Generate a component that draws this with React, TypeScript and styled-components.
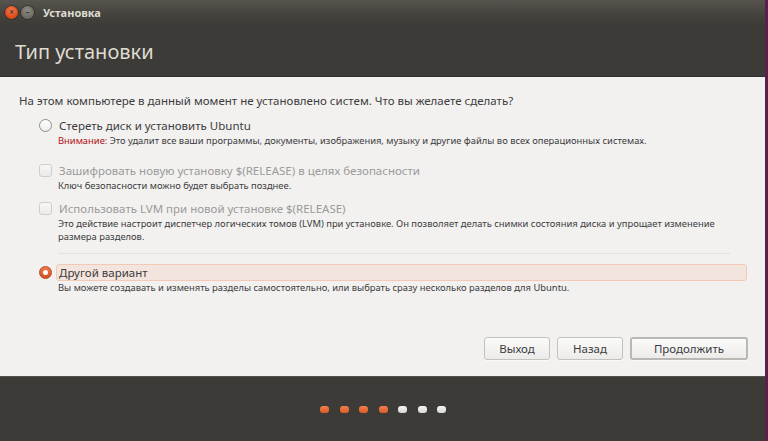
import React from 'react';
import styled, { createGlobalStyle } from 'styled-components';

const Global = createGlobalStyle`
  html, body {
    margin: 0;
    padding: 0;
    background: #5b1f4c;
    overflow: hidden;
  }
  body {
    font-family: 'Noto Sans', 'DejaVu Sans', sans-serif;
  }
`;

const Window = styled.div`
  width: 765px;
  height: 441px;
  display: flex;
  flex-direction: column;
  background: #f2f1f0;
`;

const TitleBar = styled.div`
  height: 24px;
  display: flex;
  align-items: center;
  padding-left: 5px;
  gap: 3px;
  background: linear-gradient(#57544e, #45433e 60%, #3d3c37);
`;

const WinButton = styled.span<{ close?: boolean }>`
  width: 13px;
  height: 13px;
  border-radius: 50%;
  display: flex;
  align-items: center;
  justify-content: center;
  background: ${(p) =>
    p.close
      ? 'radial-gradient(circle at 50% 35%, #f47a4c, #dd4814 70%)'
      : 'radial-gradient(circle at 50% 35%, #8e8b84, #6d6a64 70%)'};
  box-shadow: 0 0 0 1px rgba(0, 0, 0, 0.25);
  font-size: 8px;
  line-height: 1;
  color: #3c3b37;
  font-weight: bold;
`;

const Title = styled.span`
  margin-left: 6px;
  color: #dfdbd2;
  font-size: 11px;
  font-weight: bold;
`;

const Header = styled.div`
  height: 53px;
  background: #3c3b37;
  display: flex;
  align-items: center;
  padding-left: 15px;
  padding-top: 2px;
  box-sizing: border-box;
  border-bottom: 1px solid #2f2e2b;
  color: #dfdbd2;
  font-size: 20px;
`;

const Content = styled.div`
  flex: 1;
  padding: 16px 17px 0 19px;
  display: flex;
  flex-direction: column;
  color: #3c3c3c;
`;

const Question = styled.div`
  font-size: 11.5px;
  line-height: 16px;
`;

const Options = styled.div`
  margin-top: 8px;
  padding-left: 20px;
  display: flex;
  flex-direction: column;
`;

const Option = styled.div<{ gapAfter?: number }>`
  display: flex;
  flex-direction: column;
  margin-bottom: ${(p) => p.gapAfter ?? 0}px;
`;

const OptionRow = styled.div`
  display: flex;
  align-items: center;
  height: 17px;
  gap: 4px;
`;

const Label = styled.div<{ disabled?: boolean; selected?: boolean }>`
  flex: ${(p) => (p.selected ? 1 : 'none')};
  font-size: 11.5px;
  line-height: 15px;
  padding: 0 2px;
  color: ${(p) => (p.disabled ? '#9b9a98' : '#3c3c3c')};
  border: 1px solid ${(p) => (p.selected ? '#f2c9b6' : 'transparent')};
  border-radius: 3px;
  background: ${(p) => (p.selected ? '#f3e4dd' : 'transparent')};
  margin-right: ${(p) => (p.selected ? '1px' : '0')};
`;

const Radio = styled.span<{ checked?: boolean }>`
  width: 13px;
  height: 13px;
  box-sizing: border-box;
  border-radius: 50%;
  flex: none;
  display: flex;
  align-items: center;
  justify-content: center;
  border: 1px solid ${(p) => (p.checked ? '#b9461c' : '#8e8d8a')};
  background: ${(p) =>
    p.checked
      ? 'linear-gradient(#ef7a4a, #d2511f)'
      : 'linear-gradient(#ffffff, #eeedeb)'};

  &::after {
    content: '';
    display: ${(p) => (p.checked ? 'block' : 'none')};
    width: 5px;
    height: 5px;
    border-radius: 50%;
    background: #fff;
  }
`;

const Check = styled.span`
  width: 13px;
  height: 13px;
  box-sizing: border-box;
  border-radius: 3px;
  flex: none;
  border: 1px solid #cfcecb;
  background: linear-gradient(#f7f7f6, #ebeae8);
`;

const Sub = styled.div`
  margin-left: 19px;
  font-size: 9.4px;
  line-height: 13px;
  color: #3c3c3c;
  max-width: 680px;
`;

const Warn = styled.span`
  color: #b01010;
`;

const Separator = styled.div`
  margin: 10px 18px 10px 19px;
  height: 1px;
  background: #e3e2e0;
`;

const Buttons = styled.div`
  margin-top: auto;
  margin-bottom: 16px;
  display: flex;
  justify-content: flex-end;
  gap: 7px;
`;

const Button = styled.button<{ primary?: boolean; w: number }>`
  width: ${(p) => p.w}px;
  height: 23px;
  font-family: inherit;
  font-size: 11.5px;
  color: #3c3c3c;
  border-radius: 3px;
  border: ${(p) => (p.primary ? '2px solid #b9b8b5' : '1px solid #c3c2bf')};
  background: linear-gradient(#fbfbfa, #ecebe9);
  box-shadow: 0 1px 0 rgba(255, 255, 255, 0.6);
  padding: 0;
`;

const Footer = styled.div`
  height: 65px;
  background: #3c3b37;
  border-top: 1px solid #54524d;
  box-sizing: border-box;
  display: flex;
  align-items: center;
  justify-content: center;
  gap: 10.5px;
  padding-left: 1px;
`;

const Dot = styled.span<{ done?: boolean }>`
  width: 9px;
  height: 7px;
  border-radius: 3px;
  background: ${(p) =>
    p.done ? 'linear-gradient(#f08050, #dd5a24)' : 'linear-gradient(#f4f4f4, #d8d8d8)'};
`;

const steps = [true, true, true, true, false, false, false];

export default function App() {
  return (
    <>
      <Global />
      <Window>
        <TitleBar>
          <WinButton close>×</WinButton>
          <WinButton>–</WinButton>
          <Title>Установка</Title>
        </TitleBar>
        <Header>Тип установки</Header>
        <Content>
          <Question>
            На этом компьютере в данный момент не установлено систем. Что вы желаете сделать?
          </Question>
          <Options>
            <Option gapAfter={15}>
              <OptionRow>
                <Radio />
                <Label>Стереть диск и установить Ubuntu</Label>
              </OptionRow>
              <Sub>
                <Warn>Внимание:</Warn> Это удалит все ваши программы, документы, изображения,
                музыку и другие файлы во всех операционных системах.
              </Sub>
            </Option>
            <Option gapAfter={8}>
              <OptionRow>
                <Check />
                <Label disabled>Зашифровать новую установку $(RELEASE) в целях безопасности</Label>
              </OptionRow>
              <Sub>Ключ безопасности можно будет выбрать позднее.</Sub>
            </Option>
            <Option>
              <OptionRow>
                <Check />
                <Label disabled>Использовать LVM при новой установке $(RELEASE)</Label>
              </OptionRow>
              <Sub>
                Это действие настроит диспетчер логических томов (LVM) при установке. Он
                позволяет делать снимки состояния диска и упрощает изменение размера разделов.
              </Sub>
            </Option>
            <Separator />
            <Option>
              <OptionRow>
                <Radio checked />
                <Label selected>Другой вариант</Label>
              </OptionRow>
              <Sub>
                Вы можете создавать и изменять разделы самостоятельно, или выбрать сразу
                несколько разделов для Ubuntu.
              </Sub>
            </Option>
          </Options>
          <Buttons>
            <Button w={66}>Выход</Button>
            <Button w={66}>Назад</Button>
            <Button w={118} primary>
              Продолжить
            </Button>
          </Buttons>
        </Content>
        <Footer>
          {steps.map((d, i) => (
            <Dot key={i} done={d} />
          ))}
        </Footer>
      </Window>
    </>
  );
}
